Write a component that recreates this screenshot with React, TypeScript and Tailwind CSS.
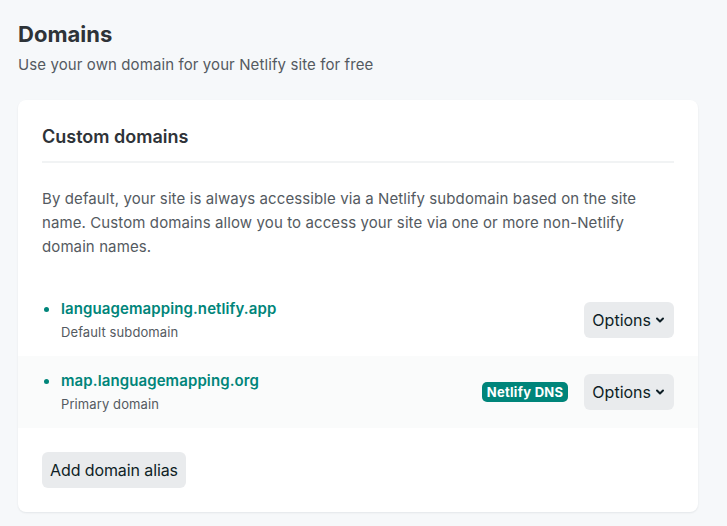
import { ChevronDown } from 'lucide-react';

type DomainEntry = {
  name: string;
  label: string;
  netlifyDns?: boolean;
  highlighted?: boolean;
};

const domains: DomainEntry[] = [
  { name: 'languagemapping.netlify.app', label: 'Default subdomain' },
  { name: 'map.languagemapping.org', label: 'Primary domain', netlifyDns: true, highlighted: true },
];

function OptionsButton() {
  return (
    <button className="flex h-9 items-center gap-[3px] rounded-md bg-[#e9ebed] px-2 text-base text-[#0e1e25]">
      Options
      <ChevronDown className="h-3 w-3" strokeWidth={4} />
    </button>
  );
}

function DomainRow({ domain }: { domain: DomainEntry }) {
  return (
    <li
      className={`flex h-[72px] items-center justify-between px-6 ${
        domain.highlighted ? 'bg-[#fafbfb]' : ''
      }`}
    >
      <div className="flex items-start gap-3">
        <span className="mt-[10px] ml-0.5 h-[5px] w-[5px] rounded-full bg-[#00857a]" />
        <div className="flex flex-col">
          <a href="#" className="text-[15px] font-semibold leading-6 tracking-[0.1px] text-[#00857a]">
            {domain.name}
          </a>
          <span className="text-[13px] leading-[22px] tracking-[0.1px] text-[#545a61]">{domain.label}</span>
        </div>
      </div>
      <div className="flex items-center gap-4">
        {domain.netlifyDns && (
          <span className="rounded-[5px] bg-[#00857a] px-[5px] text-[13px] font-bold leading-5 tracking-[0.3px] text-white">
            Netlify DNS
          </span>
        )}
        <OptionsButton />
      </div>
    </li>
  );
}

export default function App() {
  return (
    <div className="min-h-screen bg-[#f6f8fa] px-[18px] pt-[20px] pb-4 font-['Inter',sans-serif]">
      <header className="pr-3">
        <h1 className="text-[22px] font-bold leading-7 text-[#2e3338]">Domains</h1>
        <p className="mt-[5px] text-[15px] leading-6 tracking-[0.1px] text-[#545a61]">
          Use your own domain for your Netlify site for free
        </p>
      </header>

      <section className="mt-[23px] mr-[11px] rounded-lg bg-white pt-[25px] pb-6 shadow-[0_1px_2px_rgba(14,30,37,0.08)]">
        <div className="px-6">
          <h2 className="border-b-2 border-[#f1f3f4] pb-[12px] text-lg font-semibold leading-6 text-[#2e3338]">
            Custom domains
          </h2>
          <p className="mt-6 text-[15px] leading-6 tracking-[0.1px] text-[#545a61]">
            By default, your site is always accessible via a Netlify subdomain based on the site
            name. Custom domains allow you to access your site via one or more non-Netlify domain
            names.
          </p>
        </div>

        <ul className="mt-[25px]">
          {domains.map((d) => (
            <DomainRow key={d.name} domain={d} />
          ))}
        </ul>

        <div className="mt-6 px-6">
          <button className="h-9 rounded-md bg-[#e9ebed] px-2 text-base tracking-[-0.1px] text-[#0e1e25]">
            Add domain alias
          </button>
        </div>
      </section>
    </div>
  );
}
